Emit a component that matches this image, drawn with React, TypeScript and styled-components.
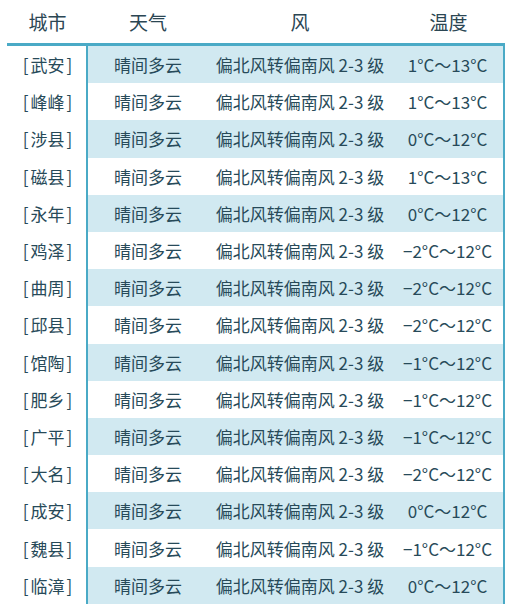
import React from 'react';
import styled, { createGlobalStyle } from 'styled-components';

const GlobalStyle = createGlobalStyle`
  html, body {
    margin: 0;
    padding: 0;
    background: #ffffff;
  }
  body {
    font-family: "Noto Sans CJK SC", "Noto Sans", sans-serif;
    color: #274a59;
  }
`;

const Page = styled.div`
  padding: 0 6px 0 7px;
`;

const Table = styled.div`
  width: 498px;
  display: grid;
  grid-template-columns: 81px 120px 184px 113px;
`;

const HeadCell = styled.div`
  height: 43px;
  display: flex;
  align-items: center;
  justify-content: center;
  font-size: 19px;
  color: #2b4653;
  border-bottom: 3px solid #4aaac6;
`;

const Cell = styled.div<{ $shaded: boolean; $first?: boolean; $last?: boolean }>`
  height: 37.2px;
  box-sizing: border-box;
  display: flex;
  align-items: center;
  justify-content: center;
  font-size: 17px;
  white-space: nowrap;
  background: ${(p) => (p.$shaded && !p.$first ? '#d1e9f1' : '#ffffff')};
  border-right: ${(p) => (p.$first || p.$last ? '2px solid #4aaac6' : 'none')};
  padding-left: ${(p) => (p.$first ? '2px' : '0')};
`;

const Bracket = styled.span`
  margin: 0 2px;
`;

const rows: [string, string][] = [
  ['武安', '1°C～13°C'],
  ['峰峰', '1°C～13°C'],
  ['涉县', '0°C～12°C'],
  ['磁县', '1°C～13°C'],
  ['永年', '0°C～12°C'],
  ['鸡泽', '−2°C～12°C'],
  ['曲周', '−2°C～12°C'],
  ['邱县', '−2°C～12°C'],
  ['馆陶', '−1°C～12°C'],
  ['肥乡', '−1°C～12°C'],
  ['广平', '−1°C～12°C'],
  ['大名', '−2°C～12°C'],
  ['成安', '0°C～12°C'],
  ['魏县', '−1°C～12°C'],
  ['临漳', '0°C～12°C'],
];

export default function App() {
  return (
    <Page>
      <GlobalStyle />
      <Table>
        <HeadCell>城市</HeadCell>
        <HeadCell>天气</HeadCell>
        <HeadCell>风</HeadCell>
        <HeadCell>温度</HeadCell>
        {rows.map(([city, temp], i) => {
          const shaded = i % 2 === 0;
          return (
            <React.Fragment key={city}>
              <Cell $shaded={shaded} $first>
                <Bracket>[</Bracket>
                {city}
                <Bracket>]</Bracket>
              </Cell>
              <Cell $shaded={shaded}>晴间多云</Cell>
              <Cell $shaded={shaded}>偏北风转偏南风 2-3 级</Cell>
              <Cell $shaded={shaded} $last>{temp}</Cell>
            </React.Fragment>
          );
        })}
      </Table>
    </Page>
  );
}
